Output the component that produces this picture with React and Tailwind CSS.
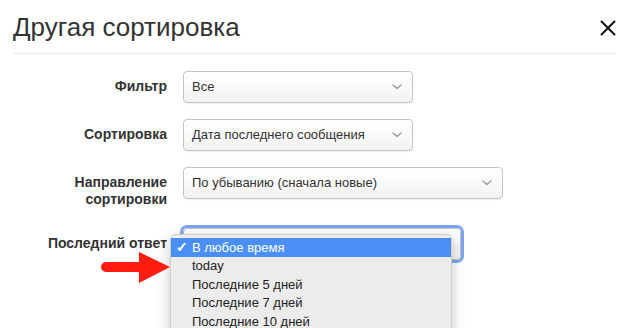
import React from "react";

const Chevron = () => (
  <svg width="10" height="6" viewBox="0 0 10 6" className="shrink-0">
    <path d="M1 1 L5 4.5 L9 1" fill="none" stroke="#a0a0a0" strokeWidth="1.6" strokeLinecap="round" strokeLinejoin="round" />
  </svg>
);

const Select = ({ value, width, focused }) => (
  <div
    className={`flex items-center justify-between h-[32px] pl-[8px] pr-[10px] rounded-[4px] border border-[#c4c4c4] bg-gradient-to-b from-white to-[#f3f3f3] text-[13px] text-[#333] ${
      focused ? "ring-[3px] ring-[#7aa6f0] border-[#8fb2ea]" : "shadow-[0_1px_1px_rgba(0,0,0,0.06)]"
    }`}
    style={{ width }}
  >
    <span>{focused ? "" : value}</span>
    <Chevron />
  </div>
);

const Row = ({ label, children, className = "" }) => (
  <div className={`flex items-start gap-4 ${className}`}>
    <div className="w-[167px] shrink-0 text-right font-bold text-[14px] leading-[17px] text-[#333] pt-[7px]">
      {label}
    </div>
    {children}
  </div>
);

const options = ["today", "Последние 5 дней", "Последние 7 дней", "Последние 10 дней"];

export default function App() {
  return (
    <div className="relative w-[629px] h-[328px] overflow-hidden bg-white font-['Liberation_Sans',Arial,sans-serif] text-[#333]">
      <div className="mx-[13px] h-[54px] flex items-start justify-between border-b border-[#ebebeb]">
        <h1 className="mt-[12px] text-[26px] leading-[30px] font-normal text-[#333]">
          Другая сортировка
        </h1>
        <svg width="16" height="16" viewBox="0 0 16 16" className="mt-[20px]">
          <path d="M1.5 1.5 L14.5 14.5 M14.5 1.5 L1.5 14.5" stroke="#111" strokeWidth="2" strokeLinecap="round" />
        </svg>
      </div>

      <div className="pt-[17px] flex flex-col gap-4">
        <Row label="Фильтр">
          <Select value="Все" width={230} />
        </Row>
        <Row label="Сортировка">
          <Select value="Дата последнего сообщения" width={230} />
        </Row>
        <Row label={<>Направление<br />сортировки</>}>
          <Select value="По убыванию (сначала новые)" width={320} />
        </Row>
        <Row label="Последний ответ" className="mt-[4px]">
          <Select value="В любое время" width={278} focused />
        </Row>
      </div>

      <div className="absolute left-[170px] top-[234px] w-[282px] h-[110px] rounded-[5px] border border-[#cfcfcf] bg-[#ececec] pt-[3px] shadow-[0_4px_14px_rgba(0,0,0,0.22)] text-[13px]">
        <div className="h-[18.5px] flex items-center bg-[#4a8ff6] text-white">
          <span className="w-[21px] pl-[5px] text-[14px] font-bold leading-none">✓</span>
          <span>В любое время</span>
        </div>
        {options.map((o) => (
          <div key={o} className="h-[18.5px] flex items-center pl-[21px] text-[#222]">
            {o}
          </div>
        ))}
      </div>

      <svg className="absolute left-[98px] top-[249px]" width="76" height="38" viewBox="0 0 76 38">
        <path d="M8 13 L46 13 L46 23 L8 23 A5 5 0 0 1 8 13 Z" fill="#ff1c10" />
        <path d="M41 3 L72 18 L41 34 Z" fill="#ff1c10" />
      </svg>
    </div>
  );
}
